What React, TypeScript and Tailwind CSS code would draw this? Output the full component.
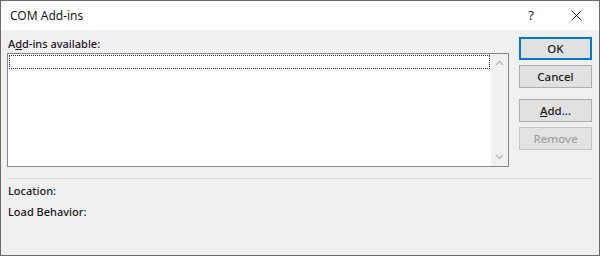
import React from 'react';

const font = { fontFamily: '"Noto Sans", "Open Sans", sans-serif' };

const DialogButton: React.FC<{ label: React.ReactNode; primary?: boolean; disabled?: boolean; className?: string }> = ({
  label,
  primary,
  disabled,
  className = '',
}) => {
  const look = primary
    ? 'border-2 border-[#0078d7] bg-[#e1e1e1] text-[#1a1a1a]'
    : disabled
    ? 'border border-[#c4c4c4] bg-[#e3e3e3] text-[#a0a0a0]'
    : 'border border-[#adadad] bg-[#e1e1e1] text-[#1a1a1a]';
  return (
    <div className={`h-[23px] w-[73px] flex items-center justify-center text-[11.5px] font-medium ${look} ${className}`}>
      {label}
    </div>
  );
};

const App: React.FC = () => {
  return (
    <div className="w-[600px] h-[256px] border border-[#6a6a6a] flex flex-col bg-[#f0f0f0] text-[#1a1a1a]" style={font}>
      {/* Title bar */}
      <div className="h-[29px] bg-white flex items-center shrink-0">
        <span className="pl-[9px] text-[12px] flex-1">COM Add-ins</span>
        <span className="w-[46px] text-center text-[13px] text-[#222] pl-[2px]">?</span>
        <div className="w-[46px] flex items-center justify-center">
          <svg width="11" height="11" viewBox="0 0 11 11">
            <path d="M0.5 0.5 L10.5 10.5 M10.5 0.5 L0.5 10.5" stroke="#222" strokeWidth="1" fill="none" />
          </svg>
        </div>
      </div>

      {/* Body */}
      <div className="flex-1 flex flex-col pt-[6px]">
        <div className="flex pl-[6px] pr-[6px]">
          <div className="flex flex-col w-[502px]">
            <div className="h-[16px] leading-[16px] text-[11px] font-medium pl-px">
              A<span className="underline">d</span>d-ins available:
            </div>
            <div className="mt-px h-[114px] border border-[#828790] bg-white flex">
              <div className="flex-1 p-px">
                <div className="h-[14px] border border-dotted border-[#333]" />
              </div>
              <div className="w-[17px] bg-[#f0f0f0] flex flex-col items-center justify-between py-[6px]">
                <svg width="9" height="6" viewBox="0 0 9 6">
                  <path d="M1 5 L4.5 1.5 L8 5" stroke="#b8b8b8" strokeWidth="1.3" fill="none" />
                </svg>
                <svg width="9" height="6" viewBox="0 0 9 6">
                  <path d="M1 1 L4.5 4.5 L8 1" stroke="#b8b8b8" strokeWidth="1.3" fill="none" />
                </svg>
              </div>
            </div>
          </div>
          <div className="ml-[10px] pt-px flex flex-col">
            <DialogButton label="OK" primary />
            <DialogButton label="Cancel" className="mt-[5px]" />
            <DialogButton
              label={
                <span>
                  <span className="underline">A</span>dd...
                </span>
              }
              className="mt-[11px]"
            />
            <DialogButton label="Remove" disabled className="mt-[5px]" />
          </div>
        </div>

        <div className="mt-[11px] mx-[6px] h-px bg-[#d9d9d9]" />

        <div className="pl-[7px] mt-[4px] flex flex-col gap-[5px] text-[11px] font-medium leading-[16px]">
          <span>Location:</span>
          <span>Load Behavior:</span>
        </div>
      </div>
    </div>
  );
};

export default App;
